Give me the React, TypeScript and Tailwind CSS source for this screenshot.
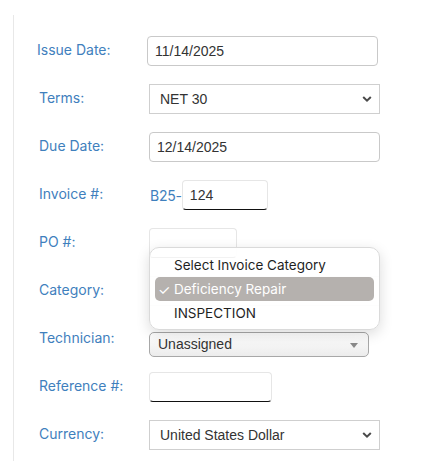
import React from "react";

const labelCls =
  "w-[110px] shrink-0 pt-[14px] text-[14px] leading-5 text-[#3f80bd] font-['Inter',sans-serif]";
const valueFont = "font-['Liberation_Sans',Arial,sans-serif] text-[14px] text-[#333]";

function Chevron() {
  return (
    <svg className="absolute right-[7px] top-1/2 -translate-y-1/2" width="10" height="7" viewBox="0 0 10 7">
      <path d="M1.2 1.5 L5 5.2 L8.8 1.5" fill="none" stroke="#4a4a4a" strokeWidth="2" />
    </svg>
  );
}

function SelectBox({ value, width = "w-[231px]" }: { value: string; width?: string }) {
  return (
    <div className={`relative flex h-[30px] ${width} items-center border border-[#cfcfcf] bg-white pl-[10px] ${valueFont}`}>
      {value}
      <Chevron />
    </div>
  );
}

function TextBox({ value, width, dark }: { value?: string; width: string; dark?: boolean }) {
  return (
    <input
      readOnly
      defaultValue={value ?? ""}
      className={`h-[30px] ${width} rounded-[4px] border bg-white px-[7px] outline-none ${valueFont} ${
        dark ? "border-[#e6e6e6] border-b-[#111]" : "border-[#c9c9c9]"
      }`}
    />
  );
}

export default function App() {
  return (
    <div className="min-h-screen bg-white">
      <div className="ml-[13px] mt-[15px] min-h-[446px] border-l border-[#e8e8e8] pl-[25px] pt-[11px]">
        {/* Issue Date */}
        <div className="-ml-[2px] flex h-12 items-start">
          <label className={labelCls}>Issue Date:</label>
          <div className="pt-[10px]">
            <TextBox value="11/14/2025" width="w-[231px]" />
          </div>
        </div>

        {/* Terms */}
        <div className="flex h-12 items-start">
          <label className={labelCls}>Terms:</label>
          <div className="pt-[10px]">
            <SelectBox value="NET 30" />
          </div>
        </div>

        {/* Due Date */}
        <div className="flex h-12 items-start">
          <label className={labelCls}>Due Date:</label>
          <div className="pt-[10px]">
            <TextBox value="12/14/2025" width="w-[231px]" />
          </div>
        </div>

        {/* Invoice */}
        <div className="flex h-12 items-start">
          <label className={labelCls}>Invoice #:</label>
          <div className="flex items-start pt-[10px]">
            <span className="pt-[6px] pl-px text-[14px] leading-5 tracking-[-0.2px] text-[#3f80bd] font-['Inter',sans-serif]">B25-</span>
            <TextBox value="124" width="w-[86px]" dark />
          </div>
        </div>

        {/* PO */}
        <div className="flex h-12 items-start">
          <label className={labelCls}>PO #:</label>
          <div className="pt-[10px]">
            <TextBox width="w-[88px]" dark />
          </div>
        </div>

        {/* Category with open menu */}
        <div className="flex h-12 items-start">
          <label className={labelCls}>Category:</label>
          <div className="relative pt-[10px]">
            <SelectBox value="Deficiency Repair" />
            <div className="absolute left-0 top-[-19px] z-10 w-[231px] rounded-[10px] border border-[#dadada] bg-white/95 px-[5px] pt-[5px] pb-[4px] shadow-[0_4px_14px_rgba(0,0,0,0.14)] font-['Inter',sans-serif] text-[13.5px] text-[#1f1f1f]">
              <div className="flex h-6 items-center pl-[19px]">Select Invoice Category</div>
              <div className="flex h-6 items-center rounded-[5px] bg-[#b5b1ae] pl-[3px] text-white">
                <span className="w-4 text-[14px]">✓</span>
                <span>Deficiency Repair</span>
              </div>
              <div className="flex h-6 items-center pl-[19px]">INSPECTION</div>
            </div>
          </div>
        </div>

        {/* Technician */}
        <div className="flex h-12 items-start">
          <label className={labelCls}>Technician:</label>
          <div className="pt-[18px]">
            <div className={`relative flex h-[25px] w-[220px] items-center rounded-[5px] border border-[#a8a8a8] bg-gradient-to-b from-white to-[#ececec] pl-[8px] ${valueFont}`}>
              Unassigned
              <svg className="absolute right-[10px] top-[10px]" width="8" height="5" viewBox="0 0 8 5">
                <path d="M0 0 H8 L4 5 Z" fill="#8a8a8a" />
              </svg>
            </div>
          </div>
        </div>

        {/* Reference */}
        <div className="flex h-12 items-start">
          <label className={labelCls}>Reference #:</label>
          <div className="pt-[10px]">
            <TextBox width="w-[123px]" dark />
          </div>
        </div>

        {/* Currency */}
        <div className="flex h-12 items-start">
          <label className={labelCls}>Currency:</label>
          <div className="pt-[10px]">
            <SelectBox value="United States Dollar" />
          </div>
        </div>
      </div>
    </div>
  );
}
